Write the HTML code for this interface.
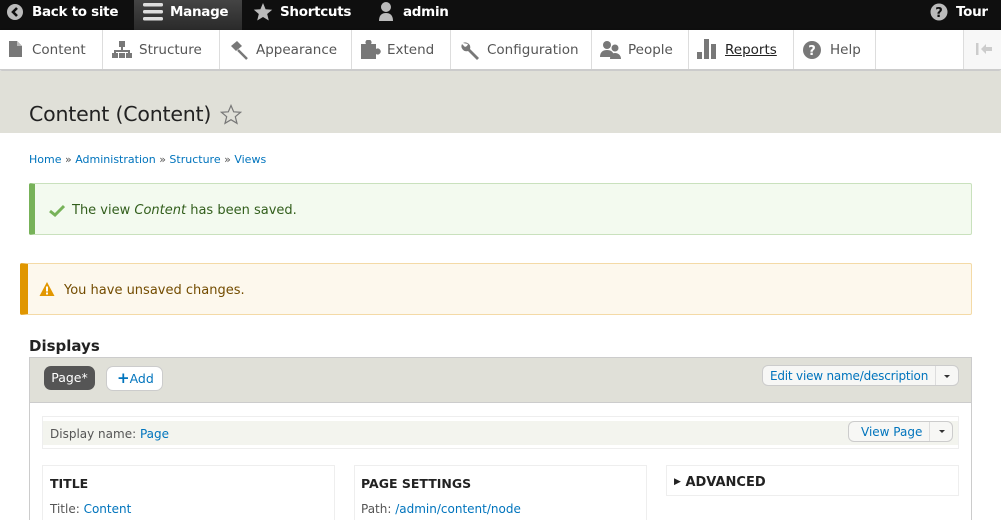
<!DOCTYPE html>
<html style="height:520px;overflow:hidden"><head><style>
*{box-sizing:border-box;margin:0;padding:0}
html,body{width:1001px;height:520px;overflow:hidden}
body{background:#fff;font-family:"DejaVu Sans","Liberation Sans",sans-serif;color:#222;position:relative}
.a{position:absolute}
.top{left:0;top:0;width:1001px;height:30px;background:#0f0f0f}
.top .t{position:absolute;top:0;height:30px;line-height:22px;color:#fff;font-weight:bold;font-size:13.5px;letter-spacing:-0.3px}
.tray{left:0;top:30px;width:1001px;height:40px;background:#fff;border-bottom:1px solid #ccc;box-shadow:0 1px 2px rgba(0,0,0,.3)}
.ti{position:absolute;top:0;height:39px;line-height:40px;font-size:13.5px;color:#555;border-right:1px solid #ddd}
.lnk{color:#0074bd}
.blk{font-size:13px}
</style></head><body>
<div class="a top">
 <div class="a" style="left:134px;top:0;width:108px;height:30px;background:linear-gradient(#444,#2a2a2a)"></div>
 <svg class="a" style="left:7px;top:4px" width="16" height="16"><circle cx="8" cy="8" r="8" fill="#bbb"/><path d="M10 4L6 8l4 4" stroke="#0f0f0f" stroke-width="2.6" fill="none"/></svg>
 <span class="t" style="left:32px;top:1px">Back to site</span>
 <svg class="a" style="left:143px;top:3px" width="20" height="18"><rect y="0" width="20" height="3.5" rx="1.5" fill="#ddd"/><rect y="7" width="20" height="3.5" rx="1.5" fill="#ddd"/><rect y="14" width="20" height="3.5" rx="1.5" fill="#ddd"/></svg>
 <span class="t" style="left:170px;top:1px">Manage</span>
 <svg class="a" style="left:253px;top:2px" width="20" height="20"><path d="M10 1l2.6 6.2 6.6.5-5 4.3 1.6 6.5L10 15l-5.8 3.5 1.6-6.5-5-4.3 6.6-.5z" fill="#bbb"/></svg>
 <span class="t" style="left:280px;top:1px">Shortcuts</span>
 <svg class="a" style="left:377px;top:1px" width="18" height="20"><circle cx="9" cy="6" r="5" fill="#bbb"/><path d="M2 20c0-6 3-8 7-8s7 2 7 8z" fill="#bbb"/></svg>
 <span class="t" style="left:403px;top:1px">admin</span>
 <svg class="a" style="left:930px;top:3px" width="18" height="18"><circle cx="9" cy="9" r="8.5" fill="#bbb"/><text x="9" y="14" font-size="13" font-weight="bold" text-anchor="middle" fill="#0f0f0f" font-family="DejaVu Sans">?</text></svg>
 <span class="t" style="left:956px;top:1px">Tour</span>
</div>
<div class="a tray">
 <div class="ti" style="left:0;width:103px;padding-left:32px">Content</div>
 <svg class="a" style="left:9px;top:11px" width="13" height="16"><path d="M0 0h8l5 5v11H0z" fill="#787878"/><path d="M8 0v5h5" fill="#bbb"/></svg>
 <div class="ti" style="left:103px;width:117px;padding-left:36px">Structure</div>
 <svg class="a" style="left:112px;top:11px" width="20" height="17"><rect x="7" y="0" width="6" height="6" fill="#787878"/><path d="M10 6v4M3 14v-4h14v4" stroke="#787878" stroke-width="2" fill="none"/><rect x="0" y="12" width="6" height="5" fill="#787878"/><rect x="7" y="12" width="6" height="5" fill="#787878"/><rect x="14" y="12" width="6" height="5" fill="#787878"/></svg>
 <div class="ti" style="left:220px;width:132px;padding-left:36px">Appearance</div>
 <svg class="a" style="left:229px;top:10px" width="20" height="20"><path d="M2 6l6-5 5 5-6 5z" fill="#787878"/><path d="M9 10l9 9" stroke="#787878" stroke-width="2.5"/></svg>
 <div class="ti" style="left:352px;width:99px;padding-left:35px">Extend</div>
 <svg class="a" style="left:361px;top:10px" width="20" height="19"><path d="M0 4h5a3 3 0 1 1 5 0h5v5a3 3 0 1 1 0 5v5H0z" fill="#787878"/></svg>
 <div class="ti" style="left:451px;width:141px;padding-left:36px">Configuration</div>
 <svg class="a" style="left:460px;top:10px" width="20" height="20"><path d="M3 3a5 5 0 0 1 7 6l9 9-2 2-9-9a5 5 0 0 1-6-7l3 3 2-1 1-2z" fill="#787878"/></svg>
 <div class="ti" style="left:592px;width:97px;padding-left:36px">People</div>
 <svg class="a" style="left:600px;top:10px" width="22" height="19"><circle cx="7" cy="5" r="4" fill="#787878"/><path d="M0 17c0-5 3-7 7-7s7 2 7 7z" fill="#787878"/><circle cx="15" cy="8" r="3.5" fill="#787878"/><path d="M10 19c0-4 2-6 5-6s6 2 6 6z" fill="#787878"/></svg>
 <div class="ti" style="left:689px;width:105px;padding-left:36px;color:#222;text-decoration:underline">Reports</div>
 <svg class="a" style="left:697px;top:9px" width="22" height="20"><rect x="0" y="13" width="5" height="7" fill="#787878"/><rect x="7" y="0" width="5" height="20" fill="#787878"/><rect x="14" y="5" width="5" height="15" fill="#787878"/></svg>
 <div class="ti" style="left:794px;width:82px;padding-left:36px">Help</div>
 <svg class="a" style="left:803px;top:11px" width="18" height="18"><circle cx="9" cy="9" r="9" fill="#787878"/><text x="9" y="14" font-size="13" font-weight="bold" text-anchor="middle" fill="#fff" font-family="DejaVu Sans">?</text></svg>
 <div class="a" style="left:963px;top:0;width:38px;height:39px;background:#f7f7f7;border-left:1px solid #ddd"></div>
 <svg class="a" style="left:976px;top:13px" width="16" height="12"><rect x="0" y="0" width="2.5" height="12" fill="#ccc"/><path d="M5 6l5-5v3h6v4h-6v3z" fill="#ccc"/></svg>
</div>
<div class="a" style="left:0;top:71px;width:1001px;height:62px;background:#e0e0d8"></div>
<div class="a" style="left:29px;top:102px;font-size:20.5px;color:#222;letter-spacing:-0.2px">Content (Content)</div>
<svg class="a" style="left:220px;top:104px" width="22" height="21"><path d="M11 1.5l2.7 6.3 6.8.5-5.2 4.4 1.7 6.6L11 15.7l-6 3.6 1.7-6.6L1.5 8.3l6.8-.5z" fill="none" stroke="#777" stroke-width="1.2"/></svg>
<div class="a lnk" style="left:29px;top:153px;font-size:11px">Home <span style="color:#555">»</span> Administration <span style="color:#555">»</span> Structure <span style="color:#555">»</span> Views</div>
<div class="a" style="left:29px;top:183px;width:943px;height:52px;background:#f3faef;border:1px solid #c9e1bd;border-left:6px solid #77b259;border-radius:2px"></div>
<svg class="a" style="left:49px;top:204px" width="16" height="13"><path d="M1 7l5 4 9-9" stroke="#77b259" stroke-width="3" fill="none"/></svg>
<div class="a blk" style="left:72px;top:203px;color:#325e1c">The view <i>Content</i> has been saved.</div>
<div class="a" style="left:20px;top:263px;width:952px;height:52px;background:#fdf8ed;border:1px solid #f4daa6;border-left:8px solid #e09600;border-radius:2px"></div>
<svg class="a" style="left:39px;top:281px" width="16" height="16"><path d="M8 1l7.5 14H.5z" fill="#e29700"/><rect x="7" y="5.5" width="2" height="5" fill="#fff"/><rect x="7" y="11.5" width="2" height="2" fill="#fff"/></svg>
<div class="a blk" style="left:64px;top:283px;color:#734c00">You have unsaved changes.</div>
<div class="a" style="left:29px;top:337px;font-size:15px;font-weight:bold">Displays</div>
<div class="a" style="left:29px;top:357px;width:943px;height:163px;border:1px solid #ccc;border-bottom:none;background:#fff"></div>
<div class="a" style="left:30px;top:358px;width:941px;height:45px;background:#e0e0d8;border-bottom:1px solid #ccc"></div>
<div class="a" style="left:44px;top:366px;width:51px;height:24px;background:#555;border-radius:7px;color:#fff;font-size:12.5px;line-height:24px;text-align:center">Page*</div>
<div class="a" style="left:106px;top:366px;width:57px;height:25px;background:#fff;border:1px solid #ccc;border-radius:7px;color:#0074bd;font-size:12.5px;line-height:23px;padding-left:10px"><b style="font-size:15px">+</b>Add</div>
<div class="a" style="left:762px;top:365px;width:197px;height:21px;background:#f7f7f5;border:1px solid #ccc;border-radius:6px;font-size:12px;line-height:21px;color:#0074bd;padding-left:7px;letter-spacing:-0.2px">Edit view name/description</div>
<div class="a" style="left:935px;top:366px;width:1px;height:19px;background:#ddd"></div>
<div class="a" style="left:944px;top:375px;border:3px solid transparent;border-top:3px solid #333"></div>
<div class="a" style="left:42px;top:416px;width:917px;height:33px;border:1px solid #eee;background:#fff"></div>
<div class="a" style="left:43px;top:421px;width:915px;height:24px;background:#f3f4ee"></div>
<div class="a" style="left:50px;top:427px;font-size:12px;color:#555">Display name: <span class="lnk">Page</span></div>
<div class="a" style="left:848px;top:421px;width:105px;height:21px;background:#f7f7f5;border:1px solid #ccc;border-radius:6px;font-size:12px;line-height:21px;color:#0074bd;padding-left:12px">View Page</div>
<div class="a" style="left:929px;top:422px;width:1px;height:19px;background:#ddd"></div>
<div class="a" style="left:939px;top:430px;border:3px solid transparent;border-top:3px solid #333"></div>
<div class="a" style="left:42px;top:465px;width:293px;height:55px;border:1px solid #eee;border-bottom:none"></div>
<div class="a" style="left:354px;top:465px;width:293px;height:55px;border:1px solid #eee;border-bottom:none"></div>
<div class="a" style="left:666px;top:465px;width:293px;height:31px;border:1px solid #eee"></div>
<div class="a" style="left:50px;top:476px;font-size:12.5px;font-weight:bold">TITLE</div>
<div class="a" style="left:50px;top:502px;font-size:12px;color:#555">Title: <span class="lnk">Content</span></div>
<div class="a" style="left:361px;top:476px;font-size:12.5px;font-weight:bold">PAGE SETTINGS</div>
<div class="a" style="left:361px;top:502px;font-size:12px;color:#555">Path: <span class="lnk">/admin/content/node</span></div>
<div class="a" style="left:674px;top:475px;font-size:13px;font-weight:bold"><span style="font-size:9px;position:relative;top:-2px">▶</span> ADVANCED</div>
</body></html>
